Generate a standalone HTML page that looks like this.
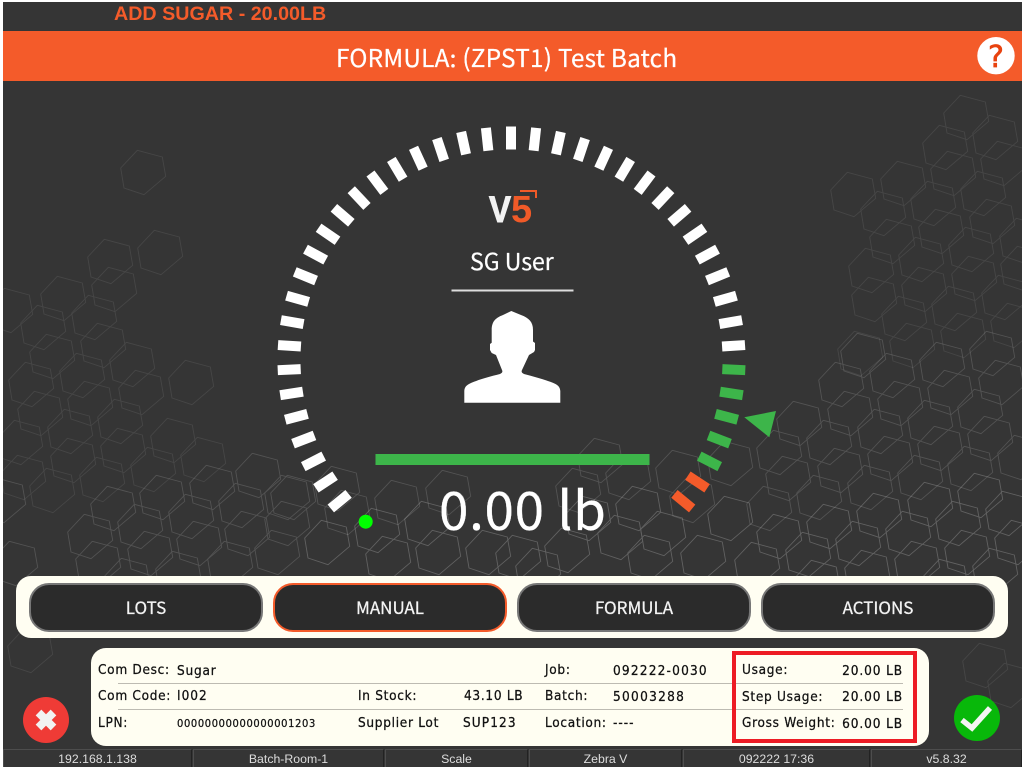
<!DOCTYPE html>
<html><head><meta charset="utf-8"><title>Formula</title>
<style>
html,body{margin:0;padding:0;background:#fff}
#p{position:relative;width:1025px;height:770px;overflow:hidden;background:#fff}
#m{position:absolute;left:3px;top:2px;width:1019px;height:765px;background:#353535}
.a{position:absolute;white-space:nowrap}
svg{position:absolute;left:0;top:0}
.os{font-family:"Noto Sans CJK JP","Liberation Sans",sans-serif;-webkit-text-stroke:.25px currentColor}
.btn{position:absolute;top:583px;width:230px;height:45px;border:2px solid #777;border-radius:20px;background:#2b2b2b;color:#f4f4f4;text-align:center;font:17px/44px "Noto Sans CJK JP","Liberation Sans",sans-serif;-webkit-text-stroke:.25px currentColor}
.t{position:absolute;white-space:nowrap;font-family:"DejaVu Sans","Liberation Sans",sans-serif;font-stretch:condensed;font-size:13.5px;line-height:16px;color:#111;letter-spacing:.7px;-webkit-text-stroke:.25px currentColor}
.s{position:absolute;top:749px;height:17px;border-top:1px solid #4d4d4d;border-left:1px solid #4d4d4d;border-right:1px solid #222;color:#ddd;text-align:center;font:12.3px/18px "Liberation Sans",sans-serif;box-sizing:content-box}
</style></head><body><div id="p"><div id="m"></div>

<svg width="1025" height="770" viewBox="0 0 1025 770">
<defs>
<path id="h" d="M-5.7-21.7 19.3-15 22.7 4.3 1 22.7-19 16-22.3-4Z" fill="none" stroke="#fff" stroke-width=".9" stroke-linejoin="round"/>
<rect id="k" x="506" y="126.5" width="10" height="23"/>
</defs>
<g opacity=".09">
<use href="#h" x="110" y="261"/><use href="#h" x="160" y="252"/><use href="#h" x="114" y="289"/><use href="#h" x="63" y="298"/><use href="#h" x="94" y="317"/><use href="#h" x="43" y="327"/><use href="#h" x="10" y="310"/><use href="#h" x="52" y="356"/><use href="#h" x="103" y="345"/><use href="#h" x="132" y="364"/><use href="#h" x="82" y="375"/><use href="#h" x="141" y="392"/><use href="#h" x="191" y="382"/><use href="#h" x="90" y="403"/><use href="#h" x="31" y="384"/><use href="#h" x="120" y="421"/><use href="#h" x="40" y="413"/><use href="#h" x="70" y="431"/><use href="#h" x="173" y="440"/><use href="#h" x="203" y="459"/><use href="#h" x="73" y="460"/><use href="#h" x="20" y="442"/><use href="#h" x="123" y="450"/><use href="#h" x="153" y="469"/><use href="#h" x="102" y="479"/><use href="#h" x="52" y="490"/><use href="#h" x="23" y="477"/>
<use href="#h" x="966" y="117"/><use href="#h" x="995" y="137"/><use href="#h" x="945" y="147"/><use href="#h" x="1003" y="163"/><use href="#h" x="953" y="173"/><use href="#h" x="903" y="183"/><use href="#h" x="853" y="194"/><use href="#h" x="883" y="213"/><use href="#h" x="933" y="203"/><use href="#h" x="983" y="193"/><use href="#h" x="892" y="241"/><use href="#h" x="941" y="231"/><use href="#h" x="992" y="221"/><use href="#h" x="971" y="249"/><use href="#h" x="921" y="259"/><use href="#h" x="871" y="270"/><use href="#h" x="1022" y="240"/><use href="#h" x="974" y="278"/><use href="#h" x="924" y="289"/><use href="#h" x="874" y="299"/><use href="#h" x="1023" y="268"/><use href="#h" x="1004" y="297"/><use href="#h" x="954" y="308"/><use href="#h" x="904" y="318"/><use href="#h" x="963" y="335"/><use href="#h" x="1013" y="325"/><use href="#h" x="912" y="345"/><use href="#h" x="860" y="353"/>
<use href="#h" x="143" y="172"/>
<use href="#h" x="985" y="665"/><use href="#h" x="1010" y="685"/><use href="#h" x="30" y="650"/>
</g>
<g opacity=".15">
<use href="#h" x="258" y="475"/><use href="#h" x="212" y="487"/><use href="#h" x="241" y="505"/><use href="#h" x="191" y="516"/><use href="#h" x="162" y="497"/><use href="#h" x="113" y="508"/><use href="#h" x="90" y="536"/><use href="#h" x="140" y="526"/><use href="#h" x="3" y="500"/><use href="#h" x="199" y="543"/><use href="#h" x="247" y="533"/><use href="#h" x="150" y="553"/><use href="#h" x="98" y="563"/><use href="#h" x="15" y="563"/><use href="#h" x="230" y="563"/><use href="#h" x="277" y="552"/><use href="#h" x="178" y="573"/><use href="#h" x="287" y="497"/><use href="#h" x="127" y="580"/><use href="#h" x="287" y="523"/>
<use href="#h" x="863" y="355"/><use href="#h" x="892" y="375"/><use href="#h" x="942" y="364"/><use href="#h" x="992" y="353"/><use href="#h" x="841" y="384"/><use href="#h" x="900" y="403"/><use href="#h" x="950" y="392"/><use href="#h" x="1001" y="382"/><use href="#h" x="850" y="413"/><use href="#h" x="799" y="423"/><use href="#h" x="880" y="431"/><use href="#h" x="930" y="422"/><use href="#h" x="980" y="411"/><use href="#h" x="829" y="442"/><use href="#h" x="779" y="452"/><use href="#h" x="890" y="458"/><use href="#h" x="940" y="448"/><use href="#h" x="990" y="438"/><use href="#h" x="840" y="470"/><use href="#h" x="788" y="478"/><use href="#h" x="920" y="477"/><use href="#h" x="970" y="468"/><use href="#h" x="1020" y="457"/><use href="#h" x="870" y="487"/><use href="#h" x="819" y="497"/><use href="#h" x="769" y="508"/><use href="#h" x="730" y="463"/>
<use href="#h" x="293" y="497"/><use href="#h" x="337" y="488"/><use href="#h" x="347" y="512"/><use href="#h" x="397" y="502"/><use href="#h" x="448" y="492"/><use href="#h" x="578" y="490"/><use href="#h" x="600" y="460"/><use href="#h" x="628" y="477"/><use href="#h" x="678" y="472"/><use href="#h" x="692" y="500"/>
</g>
<g opacity=".22">
<use href="#h" x="930" y="504"/><use href="#h" x="980" y="495"/><use href="#h" x="879" y="515"/><use href="#h" x="829" y="526"/><use href="#h" x="779" y="536"/><use href="#h" x="730" y="518"/><use href="#h" x="1008" y="513"/><use href="#h" x="958" y="523"/><use href="#h" x="908" y="533"/><use href="#h" x="858" y="543"/><use href="#h" x="808" y="554"/><use href="#h" x="757" y="564"/><use href="#h" x="1017" y="542"/><use href="#h" x="967" y="552"/><use href="#h" x="917" y="563"/><use href="#h" x="995" y="570"/><use href="#h" x="945" y="581"/><use href="#h" x="867" y="572"/><use href="#h" x="817" y="582"/>
<use href="#h" x="377" y="530"/><use href="#h" x="427" y="523"/><use href="#h" x="327" y="542"/><use href="#h" x="438" y="552"/><use href="#h" x="388" y="558"/><use href="#h" x="488" y="552"/><use href="#h" x="518" y="557"/><use href="#h" x="567" y="550"/><use href="#h" x="638" y="508"/><use href="#h" x="588" y="518"/><use href="#h" x="663" y="533"/><use href="#h" x="620" y="537"/><use href="#h" x="538" y="570"/><use href="#h" x="703" y="557"/><use href="#h" x="650" y="557"/>
</g>

<g fill="#fff">
<use href="#k" transform="rotate(-129.5 511 360)"/><use href="#k" transform="rotate(-123.33 511 360)"/><use href="#k" transform="rotate(-117.17 511 360)"/><use href="#k" transform="rotate(-111 511 360)"/><use href="#k" transform="rotate(-104.83 511 360)"/><use href="#k" transform="rotate(-98.67 511 360)"/><use href="#k" transform="rotate(-92.5 511 360)"/><use href="#k" transform="rotate(-86.33 511 360)"/><use href="#k" transform="rotate(-80.17 511 360)"/><use href="#k" transform="rotate(-74 511 360)"/><use href="#k" transform="rotate(-67.83 511 360)"/><use href="#k" transform="rotate(-61.67 511 360)"/><use href="#k" transform="rotate(-55.5 511 360)"/><use href="#k" transform="rotate(-49.33 511 360)"/><use href="#k" transform="rotate(-43.17 511 360)"/><use href="#k" transform="rotate(-37 511 360)"/><use href="#k" transform="rotate(-30.83 511 360)"/><use href="#k" transform="rotate(-24.67 511 360)"/><use href="#k" transform="rotate(-18.5 511 360)"/><use href="#k" transform="rotate(-12.33 511 360)"/><use href="#k" transform="rotate(-6.17 511 360)"/><use href="#k" transform="rotate(0 511 360)"/><use href="#k" transform="rotate(6.17 511 360)"/><use href="#k" transform="rotate(12.33 511 360)"/><use href="#k" transform="rotate(18.5 511 360)"/><use href="#k" transform="rotate(24.67 511 360)"/><use href="#k" transform="rotate(30.83 511 360)"/><use href="#k" transform="rotate(37 511 360)"/><use href="#k" transform="rotate(43.17 511 360)"/><use href="#k" transform="rotate(49.33 511 360)"/>
<g transform="translate(1 0)"><use href="#k" transform="rotate(55.5 511 360)"/><use href="#k" transform="rotate(61.67 511 360)"/><use href="#k" transform="rotate(67.83 511 360)"/><use href="#k" transform="rotate(74 511 360)"/><use href="#k" transform="rotate(80.17 511 360)"/><use href="#k" transform="rotate(86.33 511 360)"/></g>
</g>
<g fill="#3db54a">
<g transform="translate(1 0)"><use href="#k" transform="rotate(92.5 511 360)"/><use href="#k" transform="rotate(98.67 511 360)"/><use href="#k" transform="rotate(104.83 511 360)"/><use href="#k" transform="rotate(111 511 360)"/><use href="#k" transform="rotate(117.17 511 360)"/></g>
<path d="M744.3 417.3 776 411 769.3 437.3Z"/>
<rect x="375.5" y="454" width="274" height="11"/>
</g>
<g fill="#f45b2a" transform="translate(1 0)">
<use href="#k" transform="rotate(123.33 511 360)"/><use href="#k" transform="rotate(129.5 511 360)"/>
</g>
<circle cx="365.7" cy="521.7" r="7" fill="#0f0"/>

<text x="489" y="222" font-family="Liberation Sans" font-weight="700" font-size="37" fill="#f2f2f2" stroke="#f2f2f2" stroke-width="1" textLength="22" lengthAdjust="spacingAndGlyphs">V</text>
<text x="511" y="222" font-family="Liberation Sans" font-size="38" font-weight="700" fill="#f05a28">5</text>
<path d="M520 191H536V198" fill="none" stroke="#f05a28" stroke-width="2"/>

<rect x="451.5" y="289.5" width="122" height="2" fill="#ddd"/>
<path d="M511.3 311 503 315C495 318 491.7 322 491.7 330V342.7L490 344V350L491.7 353 496 355 502 370C503 372 502 373 500 374 488 377 477 380 469 384 465.5 386 464.5 388 464.3 391V402.7H560.3V391C560 388 559 386 555.5 384 547 380 535 377 524 374 522 373 521 372 522 370L529 355 534 352 535 350V343L533 341.5V330C533 322 529 318 521 315Z" fill="#fff"/>

<circle cx="46" cy="720" r="23" fill="#ef3b36"/>
<path d="M38.500 712.500 53.500 727.500M53.500 712.500 38.500 727.500" stroke="#f2f2f2" stroke-width="8" fill="none"/>
<circle cx="977" cy="718" r="23" fill="#08b80a"/>
<path d="M962 720 972 728 990 708" stroke="#f4f4f4" stroke-width="5.500" fill="none"/>
</svg>

<div class="a" style="left:114px;top:2px;color:#f45b2a;font:700 19.7px/24px 'Liberation Sans',sans-serif">ADD SUGAR - 20.00LB</div>
<div style="position:absolute;left:3px;top:31px;width:1019px;height:50px;background:#f45b2a"></div>
<svg width="1025" height="100" viewBox="0 0 1025 100"><circle cx="996" cy="55.7" r="18.7" fill="#fff"/><text x="996" y="67" text-anchor="middle" font-family="DejaVu Sans" font-size="30" fill="#e8420f" stroke="#e8420f" stroke-width=".7">?</text></svg>
<div class="a os" style="left:336px;top:39px;color:#fff;font-size:24.3px;line-height:36px;letter-spacing:.25px">FORMULA: (ZPST1) Test Batch</div>
<div class="a os" style="left:470px;top:244px;color:#fff;font-size:23px;line-height:32px">SG User</div>
<div class="a os" style="left:439px;top:470px;color:#fff;font-size:53px;line-height:76px;letter-spacing:.7px">0.00 lb</div>

<div style="position:absolute;left:16px;top:576px;width:992px;height:62px;border-radius:15px;background:#fffef2"></div>
<div class="btn" style="left:29px">LOTS</div>
<div class="btn" style="left:273px;border-color:#f45b2a">MANUAL</div>
<div class="btn" style="left:517px">FORMULA</div>
<div class="btn" style="left:761px">ACTIONS</div>

<div style="position:absolute;left:91px;top:648px;width:838px;height:98px;border-radius:15px;background:#fffef2"></div>
<div style="position:absolute;left:118px;top:683px;width:785px;height:1px;background:#bdbbb2"></div>
<div style="position:absolute;left:118px;top:709px;width:785px;height:1px;background:#bdbbb2"></div>
<div style="position:absolute;left:732px;top:651px;width:177px;height:84px;border:4px solid #ed1c24"></div>

<span class="t" style="left:98px;top:662px">Com Desc:</span><span class="t" style="left:177px;top:663px;letter-spacing:.8px">Sugar</span>
<span class="t" style="left:98px;top:688px">Com Code:</span><span class="t" style="left:177px;top:688px;letter-spacing:1px">I002</span>
<span class="t" style="left:98px;top:715px">LPN:</span><span class="t" style="left:177px;top:716px;font-size:11px;letter-spacing:.65px">00000000000000001203</span>
<span class="t" style="left:358px;top:688px">In Stock:</span><span class="t" style="left:464px;top:688px">43.10 LB</span>
<span class="t" style="left:358px;top:715px">Supplier Lot</span><span class="t" style="left:463px;top:715px;letter-spacing:1.1px">SUP123</span>
<span class="t" style="left:545px;top:662px">Job:</span><span class="t" style="left:613px;top:663px;letter-spacing:1.2px">092222-0030</span>
<span class="t" style="left:545px;top:688px">Batch:</span><span class="t" style="left:613px;top:689px;letter-spacing:1.3px">50003288</span>
<span class="t" style="left:545px;top:715px">Location:</span><span class="t" style="left:613px;top:715px;letter-spacing:1px">----</span>
<span class="t" style="left:742px;top:662px">Usage:</span><span class="t" style="right:122px;top:663px;letter-spacing:.9px">20.00 LB</span>
<span class="t" style="left:742px;top:689px">Step Usage:</span><span class="t" style="right:122px;top:689px;letter-spacing:.9px">20.00 LB</span>
<span class="t" style="left:742px;top:715px">Gross Weight:</span><span class="t" style="right:122px;top:716px;letter-spacing:.9px">60.00 LB</span>

<div class="s" style="left:3px;width:187px">192.168.1.138</div>
<div class="s" style="left:193px;width:189px">Batch-Room-1</div>
<div class="s" style="left:385px;width:141px">Scale</div>
<div class="s" style="left:529px;width:151px">Zebra V</div>
<div class="s" style="left:683px;width:185px">092222 17:36</div>
<div class="s" style="left:871px;width:149px">v5.8.32</div>
</div></body></html>
